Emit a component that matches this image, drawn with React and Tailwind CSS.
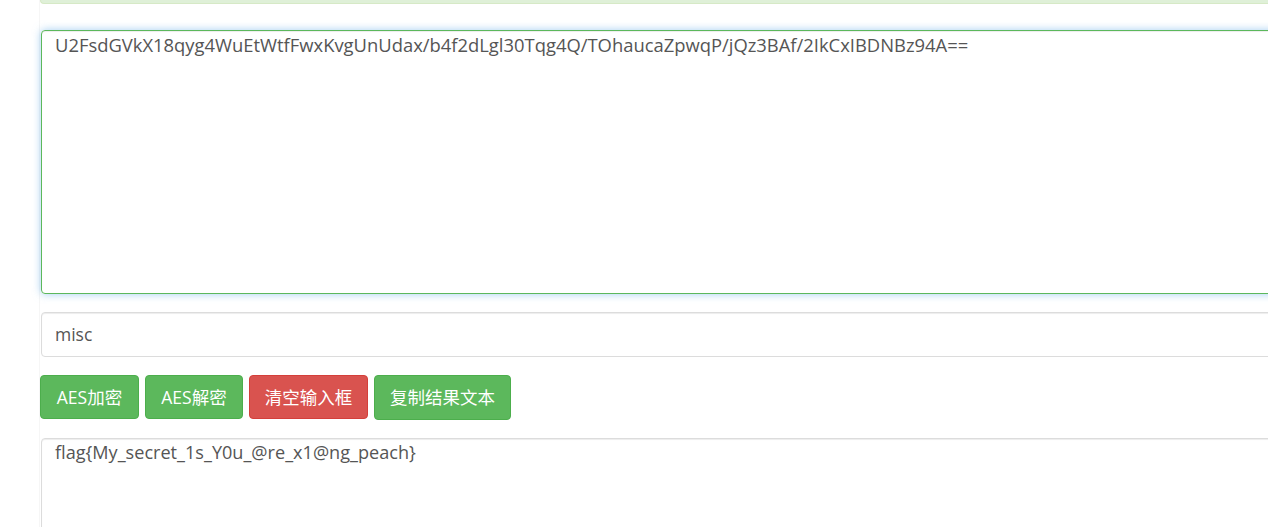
export default function App() {
  return (
    <div className="w-[1268px] h-[527px] overflow-hidden bg-white relative text-[#555] text-[17.5px] leading-[25px] [font-family:'Open_Sans','Noto_Sans_CJK_SC',sans-serif]">
      <div className="ml-[39px] border-l border-[#f6f6f6] h-full">
        <div className="h-[4px] w-[1300px] bg-[#dff0d8] border-b border-l border-[#d6e9c6] rounded-bl-[4px]" />
        <div className="pt-[26px]">
          <div className="ml-[1px] w-[1300px] h-[264px] border border-[#5cb85c] rounded-[4px] shadow-[0_0_8px_rgba(102,175,233,0.6),inset_0_1px_1px_rgba(0,0,0,0.075)] pl-[13px] pt-[1px] whitespace-nowrap text-[18.4px]">
            U2FsdGVkX18qyg4WuEtWtfFwxKvgUnUdax/b4f2dLgl30Tqg4Q/TOhaucaZpwqP/jQz3BAf/2IkCxIBDNBz94A==
          </div>
          <div className="mt-[18px] ml-[1px] w-[1300px] h-[45px] border border-[#dcdcdc] rounded-[4px] shadow-[inset_0_1px_1px_rgba(0,0,0,0.075)] pl-[13px] flex items-center">
            misc
          </div>
          <div className="mt-[18px] flex items-start gap-[6px] text-white">
            <div className="h-[44px] w-[99px] flex items-center justify-center rounded-[4px] bg-[#5cb85c] border border-[#4cae4c]">AES加密</div>
            <div className="h-[44px] w-[98px] flex items-center justify-center rounded-[4px] bg-[#5cb85c] border border-[#4cae4c]">AES解密</div>
            <div className="h-[44px] w-[119px] flex items-center justify-center rounded-[4px] bg-[#d9534f] border border-[#d43f3a]">清空输入框</div>
            <div className="h-[45px] w-[137px] flex items-center justify-center rounded-[4px] bg-[#5cb85c] border border-[#4cae4c]">复制结果文本</div>
          </div>
          <div className="mt-[18px] ml-[1px] w-[1300px] h-[200px] border border-[#dcdcdc] rounded-[4px] shadow-[inset_0_1px_1px_rgba(0,0,0,0.075)] pl-[13px] pt-[1px] whitespace-nowrap text-[18.1px]">
            flag{"{"}My_secret_1s_Y0u_@re_x1@ng_peach{"}"}
          </div>
        </div>
      </div>
    </div>
  );
}
